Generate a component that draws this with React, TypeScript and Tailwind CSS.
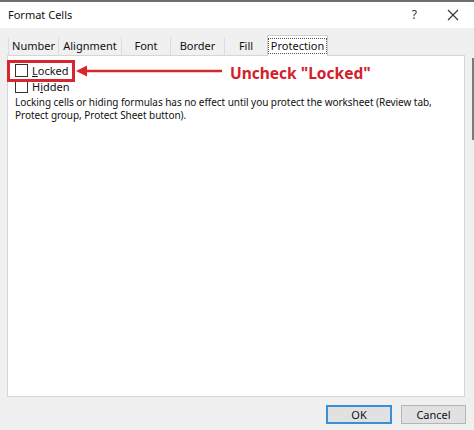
const tabs = [
  { label: "Number", w: "w-[50px]" },
  { label: "Alignment", w: "w-[63px]" },
  { label: "Font", w: "w-[49px]" },
  { label: "Border", w: "w-[54px]" },
  { label: "Fill", w: "w-[43px]" },
];

const font = { fontFamily: '"Noto Sans", "Open Sans", sans-serif' };

const Checkbox = ({ children }: { children: React.ReactNode }) => (
  <div className="flex items-center gap-[4px] h-[16px]">
    <div className="w-[13px] h-[13px] border border-[#333] bg-white" />
    <span className="text-[11px] text-[#111] leading-none">{children}</span>
  </div>
);

export default function App() {
  return (
    <div
      className="relative w-[474px] h-[430px] overflow-hidden bg-[#f0f0f0] border-t-2 border-[#6e6e6e]"
      style={font}
    >
      {/* title bar */}
      <div className="h-[26px] bg-white flex items-center justify-between pl-[8px] pr-[15px]">
        <span className="text-[11px] text-[#111]">Format Cells</span>
        <div className="flex items-center gap-[30px] text-[#333]">
          <span className="text-[12px]">?</span>
          <svg width="12" height="12" viewBox="0 0 12 12">
            <path d="M1 1 L11 11 M11 1 L1 11" stroke="#333" strokeWidth="1.1" />
          </svg>
        </div>
      </div>

      {/* tabs */}
      <div className="flex items-end pl-[8px] pt-[7px] h-[27px]">
        {tabs.map((t) => (
          <div
            key={t.label}
            className={`${t.w} h-[18px] flex items-center justify-center border-l border-[#dcdcdc] text-[11px] text-[#111]`}
          >
            {t.label}
          </div>
        ))}
        <div className="w-[61px] h-[21px] -mb-px relative z-10 bg-white border border-b-0 border-[#d0d0d0] flex items-center justify-center">
          <span className="px-[2px] border border-dotted border-[#555] text-[11px] text-[#111] leading-[14px]">
            Protection
          </span>
        </div>
      </div>

      {/* panel */}
      <div className="ml-[7px] w-[458px] h-[342px] bg-white border border-[#d6d6d6] pt-[6px] pl-[7px]">
        <Checkbox>
          <span className="underline">L</span>ocked
        </Checkbox>
        <Checkbox>
          H<span className="underline">i</span>dden
        </Checkbox>
        <p className="mt-[2px] text-[10px] leading-[13px] text-[#111] whitespace-nowrap tracking-[-0.05px]">
          Locking cells or hiding formulas has no effect until you protect the worksheet (Review tab,
          <br />
          Protect group, Protect Sheet button).
        </p>
      </div>

      {/* buttons */}
      <div className="flex justify-end gap-[9px] pr-[8px] pt-[8px]">
        <button className="w-[66px] h-[19px] bg-[#e1e1e1] border-2 border-[#3a8fd6] text-[11px] text-[#111] leading-none">
          OK
        </button>
        <button className="w-[65px] h-[19px] bg-[#e1e1e1] border border-[#b5b5b5] text-[11px] text-[#111] leading-none">
          Cancel
        </button>
      </div>

      {/* scrollbar remnant at the right edge */}
      <div className="absolute right-0 top-[56px] w-[2px] h-[82px] bg-[#7a7a7a]" />

      {/* annotation */}
      <div className="absolute left-[7px] top-[58px] w-[68px] h-[22px] border-[3px] border-[#d7262e]" />
      <svg className="absolute left-[75px] top-[62px]" width="150" height="14" viewBox="0 0 150 14">
        <line x1="8" y1="7" x2="147" y2="7" stroke="#d7262e" strokeWidth="2.5" />
        <polygon points="1,7 12,1.5 12,12.5" fill="#d7262e" />
      </svg>
      <span className="absolute left-[230px] top-[64px] text-[15.5px] font-bold text-[#d4202a] leading-none">
        Uncheck "Locked"
      </span>
    </div>
  );
}
